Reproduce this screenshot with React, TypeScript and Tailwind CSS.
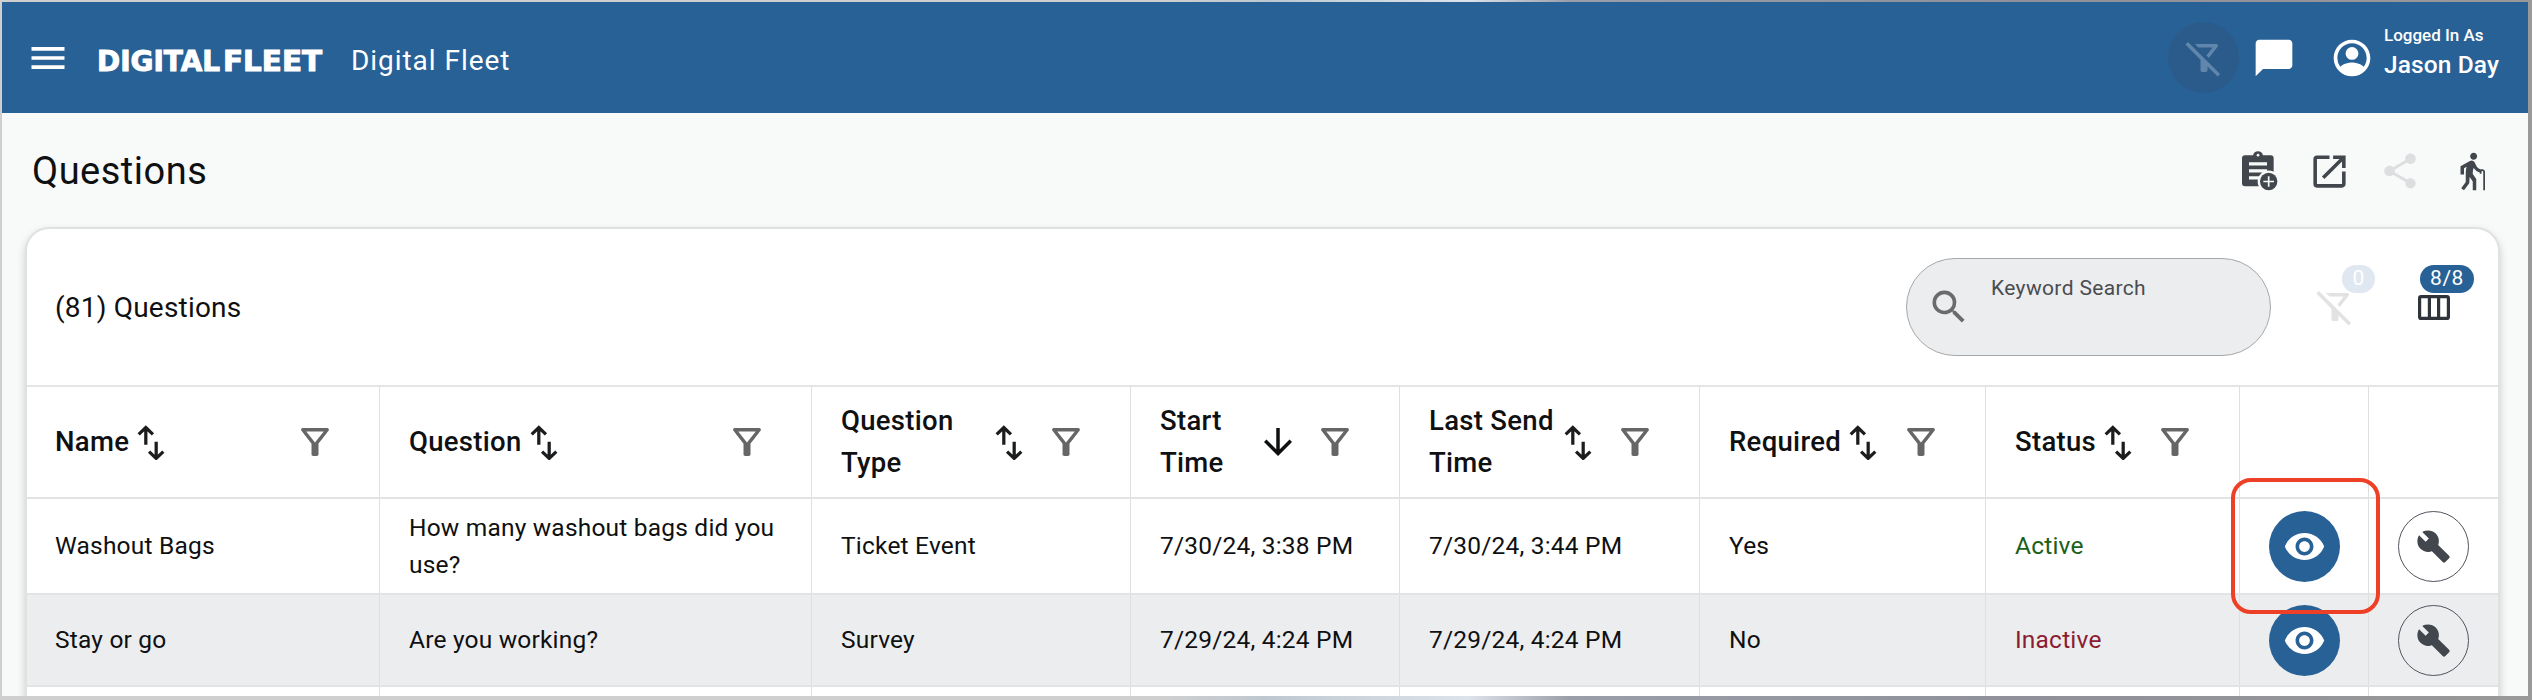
import type { ReactNode } from 'react'
import clsx from 'clsx'
import {
  MdMenu, MdOutlineFilterAltOff, MdChatBubble, MdOpenInNew, MdShare, MdElderly, MdSearch,
  MdOutlineFilterAlt, MdArrowDownward, MdVisibility,
} from 'react-icons/md'

type Column = { key: string; label: ReactNode; sorted?: boolean; wide?: boolean }
type Question = { name: string; question: string; type: string; start: string; lastSend: string; required: string; active: boolean }

const COLUMNS: Column[] = [
  { key: 'name', label: 'Name' },
  { key: 'question', label: 'Question' },
  { key: 'type', label: 'Question Type' },
  { key: 'start', label: 'Start Time', sorted: true },
  { key: 'lastSend', label: <>Last&nbsp;Send<br />Time</>, wide: true },
  { key: 'required', label: 'Required' },
  { key: 'status', label: 'Status' },
]

const QUESTIONS: Question[] = [
  { name: 'Washout Bags', question: 'How many washout bags did you use?', type: 'Ticket Event', start: '7/30/24, 3:38 PM', lastSend: '7/30/24, 3:44 PM', required: 'Yes', active: true },
  { name: 'Stay or go', question: 'Are you working?', type: 'Survey', start: '7/29/24, 4:24 PM', lastSend: '7/29/24, 4:24 PM', required: 'No', active: false },
]

const GRID = 'grid grid-cols-[353px_432px_319px_269px_300px_286px_254px_129px_129px]'
const CELL = 'flex items-center border-r border-[#dedfdf] last:border-r-0'

function Logo() {
  return (
    <svg width="226" height="40" viewBox="0 -8 226 40" className="mt-[7px] ml-7 overflow-visible fill-white font-['DejaVu_Sans'] text-[27.5px] font-bold">
      <text x="-1" y="22" textLength="123" lengthAdjust="spacingAndGlyphs" stroke="white" strokeWidth="1">DIGITAL</text>
      <text x="125" y="22" textLength="99" lengthAdjust="spacingAndGlyphs" stroke="white" strokeWidth="1">FLEET</text>
    </svg>
  )
}

function AccountIcon() {
  return (
    <svg width="44" height="44" viewBox="0 0 24 24" fill="currentColor">
      <path fillRule="evenodd" d="M12 2C6.48 2 2 6.48 2 12s4.48 10 10 10 10-4.48 10-10S17.52 2 12 2zM18.36 16.83C16.93 15.09 13.46 14.5 12 14.5s-4.93.59-6.36 2.33A7.95 7.95 0 0 1 4 12c0-4.41 3.59-8 8-8s8 3.59 8 8c0 1.82-.62 3.49-1.64 4.83z" />
      <circle cx="12" cy="9.5" r="3.5" />
    </svg>
  )
}

function AssignmentAddIcon() {
  return (
    <svg width="40" height="42" viewBox="0 0 120 125">
      <path fill="#42474e" d="M15 15H39A15.5 15.5 0 0 1 69 15H92A9 9 0 0 1 101 24V108H15A9 9 0 0 1 6 99V24A9 9 0 0 1 15 15Z" />
      <circle cx="54" cy="15" r="4" fill="#f8faf9" />
      <path stroke="#f8faf9" strokeWidth="10" d="M27 41H81M27 62H81M27 83H58" />
      <circle cx="86" cy="94" r="33" fill="#f8faf9" />
      <circle cx="86" cy="94" r="26" fill="#42474e" />
      <path stroke="#f8faf9" strokeWidth="5" d="M70 94H102M86 78V110" />
    </svg>
  )
}

function SortIcon() {
  return (
    <svg width="28" height="35" viewBox="4 3 84 108" fill="none" stroke="#1b1c1d" strokeWidth="10" className="shrink-0">
      <path d="M30 64V14M8 32L30 11L52 32M62 55V104M40 85L62 106L84 85" />
    </svg>
  )
}

function ColumnsIcon() {
  return (
    <svg width="43" height="43" viewBox="0 0 43 43" fill="none" stroke="currentColor" strokeWidth="3.2">
      <rect x="6.6" y="10.6" width="28.8" height="21.8" rx="1.5" />
      <path d="M16.4 11V32M25.6 11V32" />
    </svg>
  )
}

function WrenchIcon() {
  return (
    <svg width="43" height="43" viewBox="0 -960 960 960" fill="#42474e">
      <path d="M686-132 444-376q-20 8-40.5 12t-43.5 4q-100 0-170-70t-70-170q0-36 10-68.5t28-61.5l146 146 72-72-146-146q29-18 61.5-28t68.5-10q100 0 170 70t70 170q0 23-4 43.5T584-516l244 242q12 12 12 29t-12 29l-84 84q-12 12-29 12t-29-12Z" />
    </svg>
  )
}

function TopBar() {
  return (
    <header className="flex h-[111px] shrink-0 items-center bg-[#286196] pr-[29px] pl-6 text-white">
      <MdMenu size={44} />
      <Logo />
      <span className="mt-1.5 ml-[27px] text-[28px] tracking-[0.95px]">Digital Fleet</span>
      <div className="ml-auto flex items-center">
        <div className="flex size-[71px] items-center justify-center rounded-full bg-[#2b5b8b] text-[#6086ac]">
          <MdOutlineFilterAltOff size={42} />
        </div>
        <MdChatBubble size={44} className="ml-[13px]" />
        <span className="ml-[34px]"><AccountIcon /></span>
        <div className="mb-[9px] ml-[10px] flex w-[115px] flex-col font-medium whitespace-nowrap">
          <span className="text-[17px] leading-6">Logged In As</span>
          <span className="text-[24.5px] leading-9 tracking-[0.1px]">Jason Day</span>
        </div>
      </div>
    </header>
  )
}

function CardToolbar() {
  return (
    <div className="flex h-[158px] items-center border-b-2 border-[#e4e5e5] pr-[42px] pl-[28px]">
      <span className="mt-px text-[28px] tracking-[0.2px]">(81) Questions</span>
      <div className="ml-auto flex h-[98px] w-[365px] items-center rounded-full border border-[#a5a7a9] bg-[#ecedef] pl-5">
        <MdSearch size={44} className="text-[#6a6b6d]" />
        <span className="mb-[36px] ml-[20px] text-[21px] tracking-[0.35px] text-[#4a4c4f]">Keyword Search</span>
      </div>
      <div className="relative ml-[43px] text-[#e2e2e2]">
        <MdOutlineFilterAltOff size={42} />
        <span className="absolute -top-[21px] left-7 flex h-7 w-[33px] items-center justify-center rounded-full bg-[#dfe7f0] text-[21px] text-white">0</span>
      </div>
      <div className="relative ml-[57px] text-[#2f343b]">
        <ColumnsIcon />
        <span className="absolute -top-[21px] left-[7px] flex h-7 w-[54px] items-center justify-center rounded-full bg-[#286196] text-[21px] tracking-[0.5px] text-white">8/8</span>
      </div>
    </div>
  )
}

function HeaderCell({ column }: { column: Column }) {
  return (
    <div className={clsx(CELL, 'pr-[43px] pl-[29px] first:pl-[28px]')}>
      <div className="mr-[22px] flex flex-1 items-center gap-2">
        <span className={clsx('text-[27.5px] leading-[42.5px] font-medium tracking-[0.3px]', column.wide && 'grow')}>{column.label}</span>
        {column.sorted ? <MdArrowDownward size={42} className="-mr-[7px] ml-auto shrink-0" /> : <SortIcon />}
      </div>
      <MdOutlineFilterAlt size={42} className="shrink-0 text-[#666667]" />
    </div>
  )
}

function QuestionRow({ row, odd, highlighted }: { row: Question; odd: boolean; highlighted: boolean }) {
  const values = [row.name, row.question, row.type, row.start, row.lastSend, row.required]
  return (
    <div className={clsx(GRID, 'border-b-2 border-[#e2e3e3]', odd ? 'h-[92px] bg-[#ecedef]' : 'h-24')}>
      {values.map((value, i) => (
        <div key={i} className={clsx(CELL, 'pr-6 pl-[29px] first:pl-[28px]')}>{value}</div>
      ))}
      <div className={clsx(CELL, 'pl-[29px]', row.active ? 'text-[#1a6118]' : 'text-[#8b1c31]')}>
        {row.active ? 'Active' : 'Inactive'}
      </div>
      <div className={clsx(CELL, 'relative justify-center')}>
        <button className="flex size-[71px] items-center justify-center rounded-full bg-[#286196] text-white">
          <MdVisibility size={43} />
        </button>
        {highlighted && (
          <div className="absolute -top-[21px] -left-[9px] z-10 h-[136px] w-[149px] rounded-[20px] border-4 border-[#ee4027]" />
        )}
      </div>
      <div className={clsx(CELL, 'justify-center')}>
        <button className="flex size-[71px] items-center justify-center rounded-full border border-[#52555f]">
          <WrenchIcon />
        </button>
      </div>
    </div>
  )
}

export default function App() {
  return (
    <div className="h-[700px] w-[2532px] overflow-hidden bg-[linear-gradient(90deg,#cfcfcf_0%,#cfcfcf_46%,#bec7d0_50%,#dde3ea_58%,#9a9ea8_62%,#8f9099_80%,#999_100%)] pt-0.5 pr-1 pb-1 pl-0.5 font-[Roboto,sans-serif] text-[#0f1011]">
      <div className="flex h-[694px] flex-col overflow-hidden bg-[#f8faf9]">
        <TopBar />
        <div className="flex h-[116px] shrink-0 items-center pr-[36px] pl-[30px] text-[#42474e]">
          <h1 className="mr-auto text-[38px] tracking-[0.5px] text-[#0f1011]">Questions</h1>
          <AssignmentAddIcon />
          <MdOpenInNew size={43} className="ml-7" />
          <MdShare size={42} className="ml-[28px] text-[#dcdee0]" />
          <MdElderly size={42} className="ml-[29px]" />
        </div>
        <main className="mr-[30px] ml-[25px] h-[600px] shrink-0 rounded-t-[22px] bg-white shadow-[0_0_0_2px_#e0e2e1,0_4px_8px_2px_rgba(0,0,0,0.18)]">
          <CardToolbar />
          <div className={clsx(GRID, 'h-28 border-b-2 border-[#e2e3e3]')}>
            {COLUMNS.map(column => <HeaderCell key={column.key} column={column} />)}
            <div className={CELL} />
            <div className={CELL} />
          </div>
          <div className="text-[24.5px] leading-[37.5px] tracking-[0.2px]">
            {QUESTIONS.map((row, i) => (
              <QuestionRow key={row.name} row={row} odd={i % 2 === 1} highlighted={i === 0} />
            ))}
            {/* top edge of the next row, cut off by the window */}
            <div className={clsx(GRID, 'h-24')}>
              {Array.from({ length: 9 }, (_, i) => <div key={i} className={CELL} />)}
            </div>
          </div>
        </main>
      </div>
    </div>
  )
}
